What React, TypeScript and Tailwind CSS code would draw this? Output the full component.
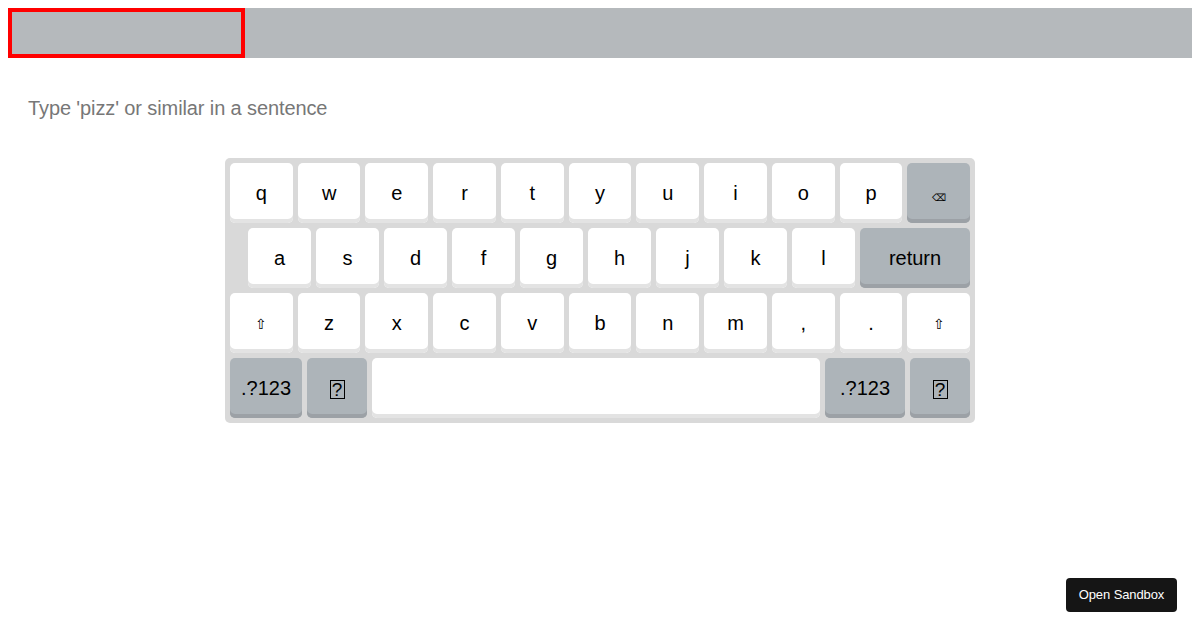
import type { ReactElement, ReactNode } from 'react';

const FONT = "font-['Liberation_Sans',sans-serif]";

const lightKey = 'bg-white shadow-[inset_0_-4px_0_#e3e3e3]';
const darkKey = 'bg-[#adb4b9] shadow-[inset_0_-4px_0_#9ca1a6]';

function Key({ label, dark, width, size = 'text-[20px]' }: { label?: ReactNode; dark?: boolean; width: string; size?: string }): ReactElement {
  return (
    <div
      className={`${width} h-[60px] flex items-center justify-center rounded-[5px] text-black ${size} ${dark ? darkKey : lightKey}`}
    >
      {label}
    </div>
  );
}

// the missing-glyph box the reference shows for the globe key
function MissingGlyph(): ReactElement {
  return (
    <span className="mt-[2px] flex h-[19px] w-[15px] items-center justify-center border-[1.5px] border-black text-[19px] leading-none">
      ?
    </span>
  );
}

const ROW_ONE = ['q', 'w', 'e', 'r', 't', 'y', 'u', 'i', 'o', 'p'];
const ROW_TWO = ['a', 's', 'd', 'f', 'g', 'h', 'j', 'k', 'l'];
const ROW_THREE = ['z', 'x', 'c', 'v', 'b', 'n', 'm', ',', '.'];

export default function App(): ReactElement {
  return (
    <div className={`relative h-[630px] w-[1200px] overflow-hidden bg-white p-2 ${FONT}`}>
      <div className="h-[50px] bg-[#b5b9bc]">
        <div className="h-full w-[237px] border-4 border-[#ff0000]" />
      </div>

      <p className="mt-[38px] ml-5 h-[24px] text-[20px] leading-[24px] tracking-[-0.11px] text-[#777777]">Type 'pizz' or similar in a sentence</p>

      <div className="mx-auto mt-[38px] flex w-[750px] flex-col gap-[5px] rounded-[5px] bg-[#d9d9d9] p-[5px]">
        <div className="flex gap-[5px]">
          {ROW_ONE.map((key) => (
            <Key key={key} label={key} width="flex-1" />
          ))}
          <Key label="⌫" dark size="text-[10px] pt-2" width="flex-1" />
        </div>
        <div className="flex gap-[5px] pl-[18px]">
          {ROW_TWO.map((key) => (
            <Key key={key} label={key} width="w-[63px]" />
          ))}
          <Key label="return" dark width="flex-1" />
        </div>
        <div className="flex gap-[5px]">
          <Key label="⇧" size="text-[14px] pt-0.5" width="flex-1" />
          {ROW_THREE.map((key) => (
            <Key key={key} label={key} width="flex-1" />
          ))}
          <Key label="⇧" size="text-[14px] pt-0.5" width="flex-1" />
        </div>
        <div className="flex gap-[5px]">
          <Key label=".?123" dark width="w-[72px]" />
          <Key label={<MissingGlyph />} dark width="w-[60px]" />
          <Key width="flex-1" />
          <Key label=".?123" dark width="w-[80px]" />
          <Key label={<MissingGlyph />} dark width="w-[60px]" />
        </div>
      </div>

      <button
        type="button"
        className="absolute right-[23px] bottom-[18px] h-[34px] w-[111px] rounded-[4px] bg-[#151515] text-[13px] tracking-[-0.1px] text-white"
      >
        Open Sandbox
      </button>
    </div>
  );
}
